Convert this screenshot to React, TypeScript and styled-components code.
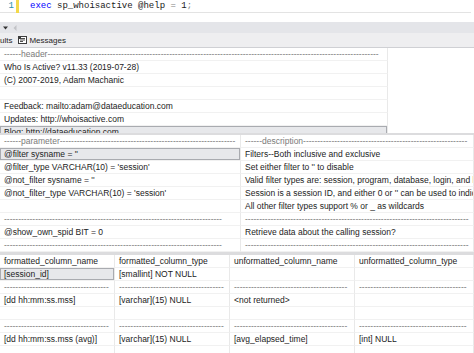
import React from 'react';
import styled, { createGlobalStyle, css } from 'styled-components';

const GlobalStyle = createGlobalStyle`
  html, body {
    margin: 0;
    padding: 0;
    background: #fff;
  }
  body {
    font-family: 'Liberation Sans', Arial, sans-serif;
  }
`;

const Window = styled.div`
  width: 474px;
  height: 353px;
  overflow: hidden;
  display: flex;
  flex-direction: column;
  background: #fff;
`;

const Editor = styled.div`
  flex: none;
  height: 22px;
`;

const CodeLine = styled.div`
  display: flex;
  align-items: center;
  width: 471px;
  height: 12px;
  border-bottom: 1px solid #e3e3e3;
  font-family: 'Liberation Mono', 'Courier New', monospace;
  font-size: 9px;
  white-space: pre;
`;

const LineNo = styled.span`
  width: 14px;
  text-align: right;
  color: #2b91af;
`;

const ChangeBar = styled.span`
  width: 3px;
  height: 13px;
  margin: 0 11px 0 2px;
  background: #f3d94a;
`;

const Token = styled.span<{ $kind?: 'kw' | 'op' }>`
  color: ${({ $kind }) => ($kind === 'kw' ? '#0000ff' : $kind === 'op' ? '#808080' : '#1a1a1a')};
`;

const ScrollBand = styled.div`
  flex: none;
  height: 11px;
  display: flex;
  align-items: center;
  gap: 5px;
  padding-left: 3px;
  background: #e4e5e9;
`;

const TabStrip = styled.div`
  flex: none;
  height: 14px;
  display: flex;
  align-items: center;
  background: #eeeef0;
  border-bottom: 1px solid #cfd0d4;
  font-size: 8px;
  color: #1e1e1e;
`;

const Tab = styled.div<{ $cut?: boolean }>`
  display: flex;
  align-items: center;
  gap: 2px;
  padding-right: ${({ $cut }) => ($cut ? '6px' : '4px')};
`;

const Grid = styled.div<{ $cols: string; $height: number }>`
  flex: none;
  display: grid;
  grid-template-columns: ${({ $cols }) => $cols};
  grid-auto-rows: 13px;
  height: ${({ $height }) => $height}px;
  overflow: hidden;
  background: #fff;
`;

const Cell = styled.div<{ $selected?: boolean; $dash?: boolean }>`
  box-sizing: border-box;
  padding: 0 5px 0 4px;
  font-size: 8.5px;
  line-height: 12px;
  white-space: nowrap;
  overflow: hidden;
  color: ${({ $dash }) => ($dash ? '#7a7a7a' : '#1c1c1c')};
  border-bottom: 1px solid #f1f1f1;
  border-right: 1px solid #e9e9e9;
  ${({ $selected }) =>
    $selected &&
    css`
      background: #e7e8eb;
      box-shadow: inset 0 0 0 1px #a9abb0;
    `}
`;

const Splitter = styled.div<{ $size: number }>`
  flex: none;
  height: ${({ $size }) => $size}px;
  background: #dcdcde;
`;

const ChevronDown = () => (
  <svg width="5" height="4" viewBox="0 0 5 4">
    <path d="M0 0.5 L5 0.5 L2.5 3.5 Z" fill="#333" />
  </svg>
);

const ArrowLeft = () => (
  <svg width="4" height="6" viewBox="0 0 4 6">
    <path d="M3.5 0 L3.5 6 L0.5 3 Z" fill="#c2c3c7" />
  </svg>
);

const MessagesIcon = () => (
  <svg width="9" height="8" viewBox="0 0 9 8">
    <rect x="0.5" y="0.5" width="8" height="7" fill="#fff" stroke="#3c3c3c" />
    <path d="M2 2.5 H7 M2 4 H7 M2 5.5 H5" stroke="#3c3c3c" strokeWidth="0.9" />
    <rect x="0" y="0" width="3" height="3" fill="#3c3c3c" />
  </svg>
);

type Row = { cells: string[]; selected?: number };

// result sets print separators as runs of hyphens sized to the column
const dash = (count: number, label = '') => (label ? `------${label}` : '') + '-'.repeat(count);

const headerRows: Row[] = [
  { cells: [dash(117, 'header')] },
  { cells: ['Who Is Active? v11.33 (2019-07-28)'] },
  { cells: ['(C) 2007-2019, Adam Machanic'] },
  { cells: [''] },
  { cells: ['Feedback: mailto:adam@dataeducation.com'] },
  { cells: ['Updates: http://whoisactive.com'] },
  { cells: ['Blog: http://dataeducation.com'], selected: 0 },
];

const paramRows: Row[] = [
  { cells: [dash(62, 'parameter'), dash(58, 'description')] },
  { cells: ["@filter sysname = ''", 'Filters--Both inclusive and exclusive'], selected: 0 },
  { cells: ["@filter_type VARCHAR(10) = 'session'", "Set either filter to '' to disable"] },
  { cells: ["@not_filter sysname = ''", 'Valid filter types are: session, program, database, login, and host'] },
  {
    cells: [
      "@not_filter_type VARCHAR(10) = 'session'",
      "Session is a session ID, and either 0 or '' can be used to indicate \"all\" sessions",
    ],
  },
  { cells: ['', 'All other filter types support % or _ as wildcards'] },
  { cells: [dash(77), dash(79)] },
  { cells: ['@show_own_spid BIT = 0', 'Retrieve data about the calling session?'] },
  { cells: [dash(77), dash(79)] },
];

const columnRows: Row[] = [
  { cells: ['formatted_column_name', 'formatted_column_type', 'unformatted_column_name', 'unformatted_column_type'] },
  { cells: ['[session_id]', '[smallint] NOT NULL', '', ''], selected: 0 },
  { cells: [dash(37), dash(37), dash(40), dash(38)] },
  { cells: ['[dd hh:mm:ss.mss]', '[varchar](15) NULL', '<not returned>', ''] },
  { cells: ['', '', '', ''] },
  { cells: [dash(37), dash(37), dash(40), dash(38)] },
  { cells: ['[dd hh:mm:ss.mss (avg)]', '[varchar](15) NULL', '[avg_elapsed_time]', '[int] NULL'] },
  { cells: ['', '', '', ''] },
];

const renderRows = (rows: Row[]) =>
  rows.flatMap((row, r) =>
    row.cells.map((text, c) => (
      <Cell key={`${r}-${c}`} $selected={row.selected === c} $dash={text.startsWith('---')}>
        {text}
      </Cell>
    ))
  );

const App = () => (
  <>
    <GlobalStyle />
    <Window>
      <Editor>
        <CodeLine>
          <LineNo>1</LineNo>
          <ChangeBar />
          <Token $kind="kw">exec</Token>
          <Token> sp_whoisactive @help </Token>
          <Token $kind="op">=</Token>
          <Token> 1</Token>
          <Token $kind="op">;</Token>
        </CodeLine>
      </Editor>
      <ScrollBand>
        <ChevronDown />
        <ArrowLeft />
      </ScrollBand>
      <TabStrip>
        <Tab $cut>ults</Tab>
        <Tab>
          <MessagesIcon />
          Messages
        </Tab>
      </TabStrip>
      <Grid $cols="388px" $height={85}>
        {renderRows(headerRows)}
      </Grid>
      <Splitter $size={2} />
      <Grid $cols="241px 1fr" $height={117}>
        {renderRows(paramRows)}
      </Grid>
      <Splitter $size={3} />
      <Grid $cols="115px 115px 125px 1fr" $height={98}>
        {renderRows(columnRows)}
      </Grid>
    </Window>
  </>
);

export default App;
